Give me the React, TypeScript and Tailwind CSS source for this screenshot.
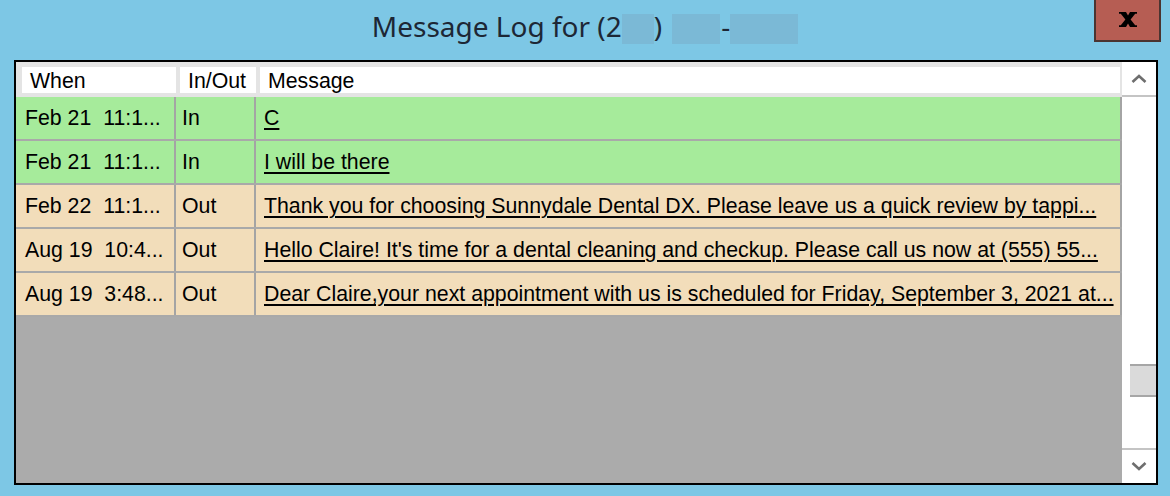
import React from 'react';

type Msg = { when: string; dir: 'In' | 'Out'; text: string };

const messages: Msg[] = [
  { when: 'Feb 21  11:1...', dir: 'In', text: 'C' },
  { when: 'Feb 21  11:1...', dir: 'In', text: 'I will be there' },
  {
    when: 'Feb 22  11:1...',
    dir: 'Out',
    text: 'Thank you for choosing Sunnydale Dental DX. Please leave us a quick review by tappi...',
  },
  {
    when: 'Aug 19  10:4...',
    dir: 'Out',
    text: "Hello Claire! It's time for a dental cleaning and checkup. Please call us now at (555) 55...",
  },
  {
    when: 'Aug 19  3:48...',
    dir: 'Out',
    text: 'Dear Claire,your next appointment with us is scheduled for Friday, September 3, 2021 at...',
  },
];

const Chevron: React.FC<{ down?: boolean }> = ({ down }) => (
  <svg width="16" height="10" viewBox="0 0 16 10" fill="none">
    <path
      d={down ? 'M1.5 2 L8 8 L14.5 2' : 'M1.5 8 L8 2 L14.5 8'}
      stroke="#6e6e6e"
      strokeWidth="2.6"
    />
  </svg>
);

const App: React.FC = () => {
  return (
    <div className="w-[1170px] h-[496px] bg-[#7dc7e5] flex flex-col overflow-hidden relative">
      {/* title bar */}
      <div className="h-[60px] flex justify-center items-start pt-[14px] text-[#1d2735] text-[28px] leading-[25px] font-['Noto_Sans',sans-serif]">
        <span>Message Log for (2</span>
        <span className="inline-block w-[32px] h-[30px] bg-[#7bb9d6]" />
        <span>)</span>
        <span className="inline-block w-[48px] h-[30px] ml-[10px] bg-[#7bb9d6]" />
        <span className="ml-[1px]">-</span>
        <span className="inline-block w-[68px] h-[30px] bg-[#7bb9d6]" />
      </div>

      {/* close button */}
      <div className="absolute left-[1094px] top-0 w-[67px] h-[42px] bg-[#b65d53] border-x-2 border-b-2 border-[#4b3431] flex items-center justify-center">
        <svg width="20" height="17" viewBox="0 0 20 17" className="mb-[2px]">
          <path
            d="M1 1 H8 L10 4.5 L12 1 H19 V2.8 H17.2 L12.6 8.5 L17.2 14.2 H19 V16 H12 L10 12.5 L8 16 H1 V14.2 H2.8 L7.4 8.5 L2.8 2.8 H1 Z"
            fill="#000"
          />
        </svg>
      </div>

      {/* grid */}
      <div className="ml-[14px] w-[1144px] h-[425px] border-2 border-black flex font-['Liberation_Sans',Arial,sans-serif] text-[21.3px] text-black">
        <div className="w-[1106px] flex flex-col bg-[#ababab]">
          <div className="h-[35px] bg-[#e4e4e4] flex pt-[5px] pb-[4px] pl-[6px] gap-[4px] shrink-0">
            <div className="w-[154px] bg-white pl-2 pt-[3px] flex items-center">When</div>
            <div className="w-[76px] bg-white pl-2 pt-[3px] flex items-center">In/Out</div>
            <div className="w-[860px] bg-white pl-2 pt-[3px] flex items-center">Message</div>
          </div>
          {messages.map((m, i) => (
            <div
              key={i}
              className={`h-[44px] flex border-b-2 border-[#a9a9a9] shrink-0 ${
                m.dir === 'In' ? 'bg-[#a6eb9b]' : 'bg-[#f2ddba]'
              }`}
            >
              <div className="w-[160px] pl-[9px] pt-[2px] flex items-center border-r-2 border-[#a4a4a4] whitespace-pre">
                {m.when}
              </div>
              <div className="w-[80px] pl-[6px] pt-[2px] flex items-center border-r-2 border-[#a4a4a4]">
                {m.dir}
              </div>
              <div className="flex-1 pl-[8px] pt-[2px] flex items-center border-r-2 border-[#a4a4a4] whitespace-nowrap overflow-hidden">
                <span className="underline decoration-2 underline-offset-[3px]">{m.text}</span>
              </div>
            </div>
          ))}
        </div>

        {/* scrollbar */}
        <div className="flex-1 bg-white flex flex-col">
          <div className="h-[35px] border-b-2 border-[#c4c4c4] flex items-center justify-center shrink-0">
            <Chevron />
          </div>
          <div className="h-[267px] shrink-0" />
          <div className="h-[33px] ml-[8px] bg-[#dadada] border-y-2 border-[#a6a6a6] shrink-0" />
          <div className="flex-1" />
          <div className="h-[35px] border-t-2 border-[#c4c4c4] flex items-center justify-center shrink-0 pb-[2px]">
            <Chevron down />
          </div>
        </div>
      </div>
    </div>
  );
};

export default App;
